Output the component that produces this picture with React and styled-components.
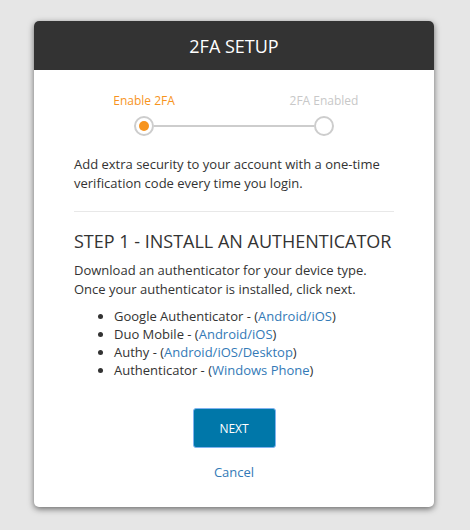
import React from "react";
import styled, { createGlobalStyle } from "styled-components";

const Global = createGlobalStyle`
  html, body { margin: 0; padding: 0; background: #e6e6e6; }
  body { font-family: "Open Sans", "Liberation Sans", sans-serif; color: #333; }
  * { box-sizing: border-box; }
`;

const Page = styled.div`
  padding: 21px 36px 24px 34px;
`;

const Card = styled.div`
  width: 400px;
  background: #fff;
  border-radius: 5px;
  box-shadow: 0 2px 6px rgba(0, 0, 0, 0.55);
  overflow: hidden;
`;

const Header = styled.div`
  height: 49px;
  background: #333;
  color: #fff;
  display: flex;
  align-items: center;
  justify-content: center;
  font-size: 18px;
`;

const Body = styled.div`
  padding: 22px 40px 26px 40px;
`;

const Stepper = styled.div`
  display: flex;
  padding: 0 60px;
`;

const Step = styled.div`
  width: 20px;
  flex: none;
  display: flex;
  flex-direction: column;
  align-items: center;
`;

const StepLabel = styled.div`
  font-size: 12px;
  line-height: 17px;
  white-space: nowrap;
  color: ${(p) => (p.$active ? "#f7941d" : "#c8c8c8")};
  margin-bottom: 7px;
`;

const Dot = styled.div`
  width: 20px;
  height: 20px;
  border-radius: 50%;
  border: 2px solid #cdcdcd;
  background: #fff;
  display: flex;
  align-items: center;
  justify-content: center;
  &::after {
    content: "";
    width: 10px;
    height: 10px;
    border-radius: 50%;
    background: ${(p) => (p.$active ? "#f7941d" : "transparent")};
  }
`;

const Line = styled.div`
  flex: 1;
  height: 2px;
  align-self: flex-end;
  margin-bottom: 9px;
  background: #cdcdcd;
`;

const Text = styled.p`
  margin: ${(p) => p.$m || "0"};
  font-size: 13px;
  line-height: 19px;
`;

const Divider = styled.hr`
  border: none;
  border-top: 1px solid #e8e8e8;
  margin: 18px 0 17px;
`;

const Heading = styled.h2`
  margin: 0;
  font-size: 18px;
  font-weight: 400;
  line-height: 24px;
`;

const List = styled.ul`
  margin: 8px 0 0;
  padding-left: 40px;
  font-size: 13px;
  line-height: 18px;
`;

const Link = styled.a`
  color: #337ab7;
  text-decoration: none;
`;

const Actions = styled.div`
  display: flex;
  flex-direction: column;
  align-items: center;
  margin-top: 29px;
`;

const Button = styled.button`
  width: 83px;
  height: 40px;
  background: #0077a9;
  color: #fff;
  border: 1px solid #7fb3f0;
  border-radius: 3px;
  font-family: inherit;
  font-size: 12px;
`;

const Cancel = styled.a`
  margin-top: 15px;
  color: #337ab7;
  font-size: 13px;
  text-decoration: none;
`;

const apps = [
  ["Google Authenticator", "Android/iOS"],
  ["Duo Mobile", "Android/iOS"],
  ["Authy", "Android/iOS/Desktop"],
  ["Authenticator", "Windows Phone"],
];

export default function App() {
  return (
    <>
      <Global />
      <Page>
        <Card>
          <Header>2FA SETUP</Header>
          <Body>
            <Stepper>
              <Step>
                <StepLabel $active>Enable 2FA</StepLabel>
                <Dot $active />
              </Step>
              <Line />
              <Step>
                <StepLabel>2FA Enabled</StepLabel>
                <Dot />
              </Step>
            </Stepper>
            <Text $m="19px 0 0">
              Add extra security to your account with a one-time verification code every time you login.
            </Text>
            <Divider />
            <Heading>STEP 1 - INSTALL AN AUTHENTICATOR</Heading>
            <Text $m="8px 0 0">
              Download an authenticator for your device type.
              <br />
              Once your authenticator is installed, click next.
            </Text>
            <List>
              {apps.map(([name, plat]) => (
                <li key={name}>
                  {name} - (<Link href="#">{plat}</Link>)
                </li>
              ))}
            </List>
            <Actions>
              <Button>NEXT</Button>
              <Cancel href="#">Cancel</Cancel>
            </Actions>
          </Body>
        </Card>
      </Page>
    </>
  );
}
